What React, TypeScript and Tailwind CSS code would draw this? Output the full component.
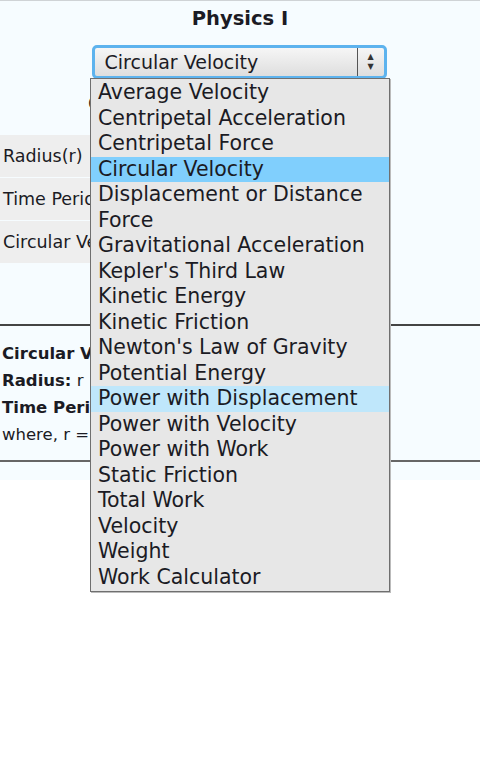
import React from 'react';

const options = [
  'Average Velocity',
  'Centripetal Acceleration',
  'Centripetal Force',
  'Circular Velocity',
  'Displacement or Distance',
  'Force',
  'Gravitational Acceleration',
  "Kepler's Third Law",
  'Kinetic Energy',
  'Kinetic Friction',
  "Newton's Law of Gravity",
  'Potential Energy',
  'Power with Displacement',
  'Power with Velocity',
  'Power with Work',
  'Static Friction',
  'Total Work',
  'Velocity',
  'Weight',
  'Work Calculator',
];

const selected = 'Circular Velocity';
const hovered = 'Power with Displacement';

const inputs = ['Radius(r)', 'Time Period(T)', 'Circular Velocity(v)'];

export default function App() {
  return (
    <div className="relative min-h-[770px] bg-white font-['DejaVu_Sans',sans-serif] text-[#1b1b24]">
      <div className="h-[480px] border-t border-[#cfd3d6] bg-[#f6fcff]">
        <h1 className="pt-[5px] text-center text-[19.5px] font-bold leading-[26px]">Physics I</h1>

        {/* select box */}
        <div className="mt-[13px] flex justify-center">
          <div className="ml-[-2px] flex h-[34px] w-[295px] rounded-[5px] border-[3px] border-[#5db3ee] bg-gradient-to-b from-[#f6f6f6] to-[#dedede]">
            <div className="flex flex-1 items-center border-r border-[#555] pl-[10px] text-[19px]">{selected}</div>
            <div className="flex w-[26px] flex-col items-center justify-center text-[8px] leading-[10px] text-[#333]">
              <span>▲</span>
              <span>▼</span>
            </div>
          </div>
        </div>

        <h2 className="mt-[12px] pl-[88px] text-[19px] leading-[24px]">Circular Velocity Calculator</h2>

        {/* input table */}
        <div className="mt-[20px] flex w-[380px] flex-col gap-px">
          {inputs.map((label) => (
            <div key={label} className="flex h-[42px] items-center bg-[#eeeeee] pl-[3px] text-[17.5px]">
              {label}
            </div>
          ))}
        </div>

        <div className="mt-[61px] h-[2px] bg-[#444]" />

        <div className="pl-[2px] pt-[14px] text-[16.5px] leading-[27px]">
          <div className="font-bold">Circular Velocity: v</div>
          <div>
            <span className="font-bold">Radius:</span> r
          </div>
          <div className="font-bold">Time Period: T</div>
          <div>where, r = radius, T = time period</div>
        </div>

        <div className="mt-[12px] h-[2px] bg-[#666]" />
      </div>

      {/* open dropdown list */}
      <ul className="absolute left-[90px] top-[78px] w-[300px] border border-[#6f6f6f] bg-[#e7e7e7] py-px text-[20.5px] shadow-[1px_1px_0_#bbb]">
        {options.map((o) => (
          <li
            key={o}
            className={`flex h-[25.5px] items-center whitespace-nowrap pl-[7px] ${
              o === selected ? 'bg-[#80cffd]' : o === hovered ? 'bg-[#bfe7fb]' : ''
            }`}
          >
            {o}
          </li>
        ))}
      </ul>
    </div>
  );
}
